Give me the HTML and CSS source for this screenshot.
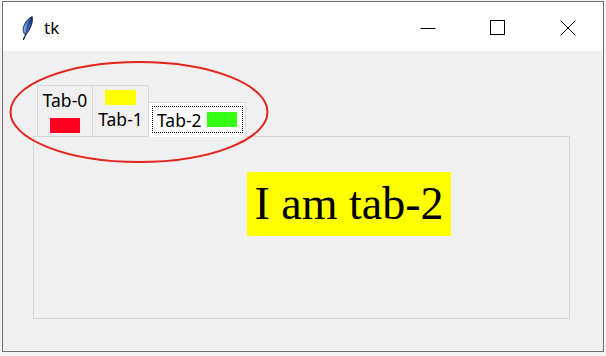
FILE: index.html
```html
<!DOCTYPE html>
<html>
<head>
<meta charset="utf-8">
<link rel="stylesheet" href="styles.css">
</head>
<body>
<div class="window">
  <div class="titlebar">
    <svg class="app-icon" width="12" height="24" viewBox="0 0 12 24">
      <defs>
        <linearGradient id="fg" x1="0" y1="0" x2="1" y2="0">
          <stop offset="0" stop-color="#8fb4ee"/>
          <stop offset="0.5" stop-color="#3d6fcc"/>
          <stop offset="1" stop-color="#1a3478"/>
        </linearGradient>
      </defs>
      <path d="M11.2 0.5 C12.4 5.5 9.6 13 5.2 18.6 C2.2 18.4 1.2 13.6 3.2 9 C5 4.8 8.4 1.6 11.2 0.5 Z" fill="url(#fg)" stroke="#16203a" stroke-width="0.9"/>
      <path d="M10.4 2.4 C8 7.4 6.2 12.4 4.6 18" fill="none" stroke="#16203a" stroke-width="0.6"/>
      <path d="M4.8 18.2 L2.4 23.4" fill="none" stroke="#16203a" stroke-width="1.3" stroke-linecap="round"/>
    </svg>
    <span class="title">tk</span>
    <div class="spacer"></div>
    <div class="ctrl">
      <svg width="16" height="16" viewBox="0 0 16 16"><path d="M0.5 8.5 H15.5" stroke="#000" stroke-width="1"/></svg>
    </div>
    <div class="ctrl">
      <svg width="16" height="16" viewBox="0 0 16 16"><rect x="0.5" y="0.5" width="14" height="14" fill="none" stroke="#000" stroke-width="1"/></svg>
    </div>
    <div class="ctrl">
      <svg width="16" height="16" viewBox="0 0 16 16"><path d="M0.5 0.5 L15.5 15.5 M15.5 0.5 L0.5 15.5" stroke="#000" stroke-width="1"/></svg>
    </div>
  </div>
  <div class="client">
    <div class="notebook">
      <div class="tabs">
        <div class="tab tab0">
          <span class="tab-text">Tab-0</span>
          <span class="swatch red"></span>
        </div>
        <div class="tab tab1">
          <span class="swatch yellow"></span>
          <span class="tab-text t1">Tab-1</span>
        </div>
        <div class="tab tab2">
          <div class="focus">
            <span class="tab-text">Tab-2</span>
            <span class="swatch green"></span>
          </div>
        </div>
      </div>
      <div class="pane">
        <div class="label">I am tab-2</div>
      </div>
    </div>
    <svg class="ellipse" width="280" height="110" viewBox="0 0 280 110">
      <ellipse cx="134" cy="55" rx="128.5" ry="50" fill="none" stroke="#e3231c" stroke-width="2"/>
    </svg>
  </div>
</div>
</body>
</html>
```

FILE: styles.css
```css
html, body {
  margin: 0;
  padding: 0;
}
body {
  width: 606px;
  height: 356px;
  background: #f3f3f3;
  overflow: hidden;
  font-family: "Noto Sans", "Liberation Sans", sans-serif;
}
.window {
  margin: 1px 0 0 2px;
  width: 600px;
  height: 349px;
  border: 1px solid #6e6e6e;
  display: flex;
  flex-direction: column;
  background: #f0f0f0;
}
.titlebar {
  height: 49px;
  background: #ffffff;
  display: flex;
  align-items: center;
  padding-left: 18px;
  padding-top: 2px;
  box-sizing: border-box;
}
.app-icon {
  display: block;
  margin-top: 1px;
}
.title {
  margin-left: 11px;
  font-size: 17px;
  color: #000;
  line-height: 20px;
}
.spacer {
  flex: 1;
}
.ctrl {
  width: 70px;
  display: flex;
  justify-content: center;
  align-items: center;
}
.ctrl svg {
  display: block;
}
.client {
  flex: 1;
  position: relative;
  background: #f0f0f0;
}
.notebook {
  margin: 34px 0 0 30px;
  width: 537px;
}
.tabs {
  display: flex;
  align-items: flex-end;
  padding-left: 4px;
}
.tab {
  box-sizing: border-box;
  display: flex;
  flex-direction: column;
  align-items: center;
  background: #f0f0f0;
  border-top: 1px solid #d9d9d9;
  border-left: 1px solid #d9d9d9;
}
.tab-text {
  font-size: 17.5px;
  line-height: 20px;
  color: #000;
  white-space: nowrap;
}
.swatch {
  display: block;
  height: 15px;
}
.red {
  width: 30px;
  background: #ff0021;
}
.yellow {
  width: 31px;
  background: #ffff00;
}
.green {
  width: 30px;
  background: #35ff14;
}
.tab0 {
  width: 55px;
  height: 51px;
  padding-top: 4px;
}
.tab0 .red {
  margin-top: 8px;
}
.tab1 {
  width: 57px;
  height: 51px;
  padding-top: 4px;
  border-right: 1px solid #d9d9d9;
}
.tab1 .t1 {
  margin-top: 4px;
}
.tab2 {
  position: relative;
  z-index: 1;
  width: 98px;
  height: 35px;
  margin-left: -1px;
  margin-bottom: -1px;
  background: #ffffff;
  border-right: 1px solid #d9d9d9;
  padding: 3px 0 0 3px;
  align-items: flex-start;
}
.focus {
  box-sizing: border-box;
  width: 91px;
  height: 27px;
  border: 1px dotted #000;
  display: flex;
  align-items: center;
  padding-left: 4px;
  gap: 5px;
}
.pane {
  box-sizing: border-box;
  height: 183px;
  border: 1px solid #d6d6d6;
  padding: 35px 0 0 213px;
}
.label {
  width: 204px;
  height: 64px;
  background: #ffff00;
  font-family: "Liberation Serif", "Times New Roman", serif;
  font-size: 46px;
  line-height: 63px;
  text-align: center;
  color: #000;
}
.ellipse {
  position: absolute;
  left: 2px;
  top: 6px;
}
```
